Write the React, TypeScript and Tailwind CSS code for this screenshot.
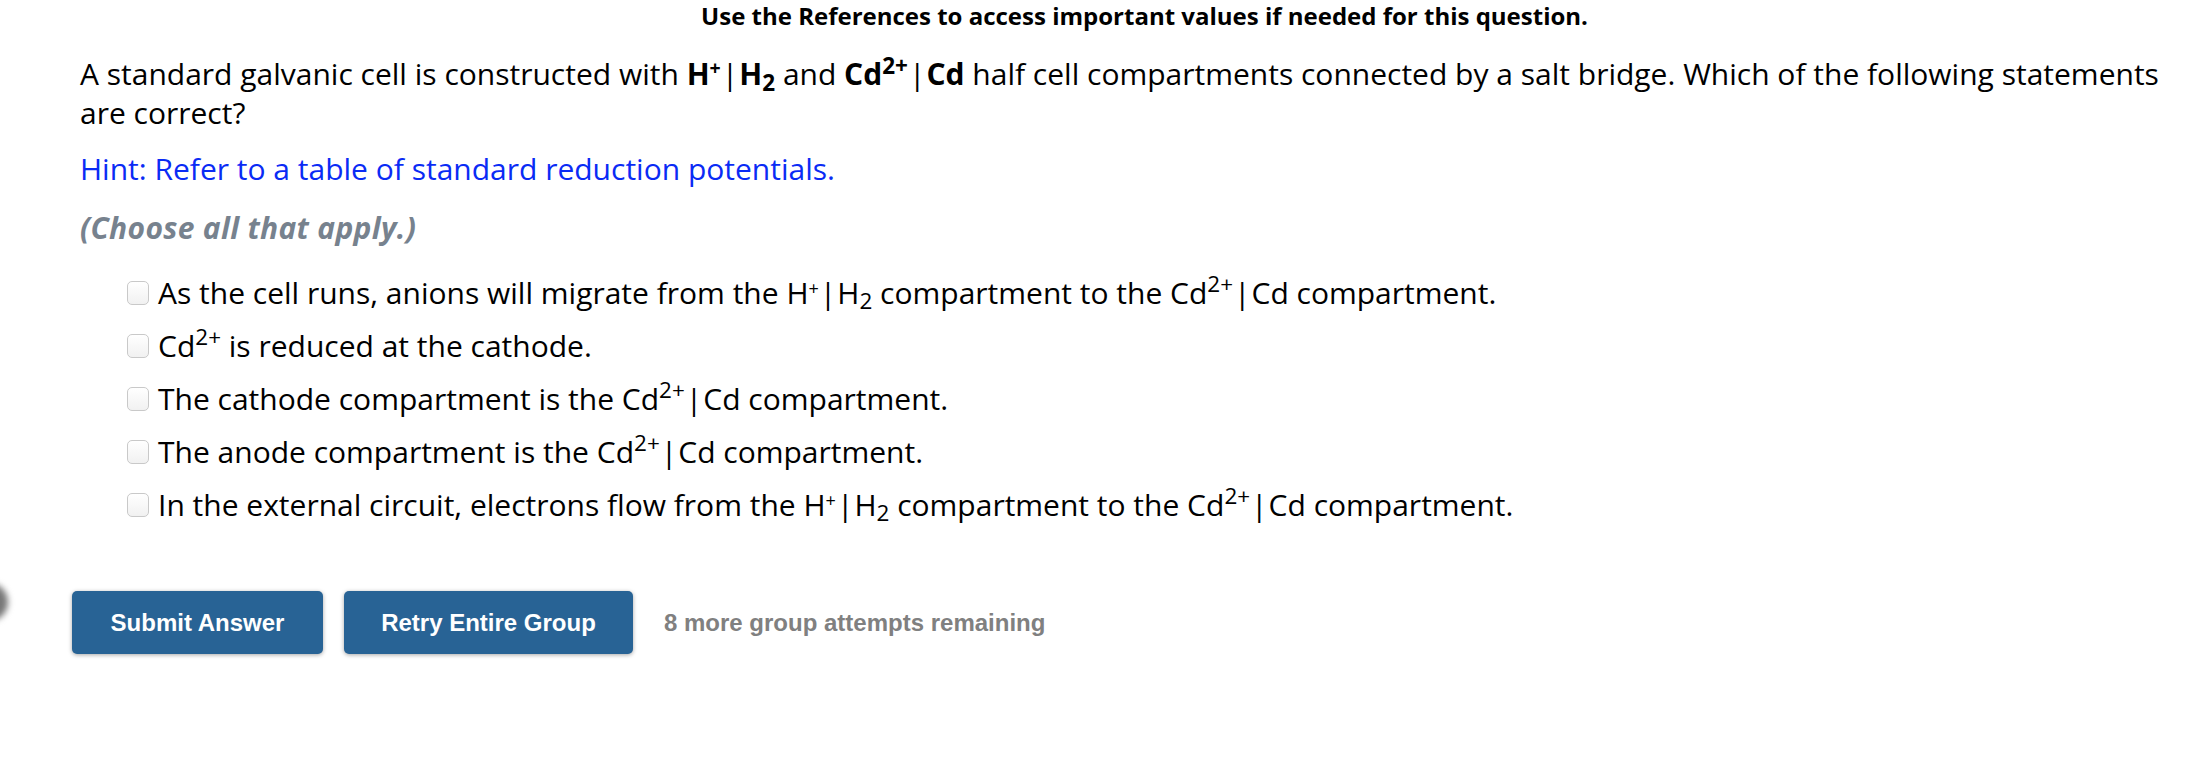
import React from "react";

const Box = () => (
  <span className="inline-block w-[22px] h-[24px] rounded-[5px] border border-[#c9c9c9] bg-gradient-to-b from-white to-[#f1f1f1] shrink-0" />
);

const Pipe = () => <span className="font-normal mx-[1px]">|</span>;

const Sup = ({ children, s = "text-[0.75em]" }: { children: React.ReactNode; s?: string }) => (
  <sup className={`${s} leading-[0]`}>{children}</sup>
);
const Sub = ({ children }: { children: React.ReactNode }) => (
  <sub className="text-[0.75em] leading-[0]">{children}</sub>
);

const HH2 = () => (
  <>
    H<Sup s="text-[0.6em]">+</Sup>
    <Pipe />H<Sub>2</Sub>
  </>
);
const CdCd = () => (
  <>
    Cd<Sup>2+</Sup>
    <Pipe />Cd
  </>
);

const options: React.ReactNode[] = [
  <>As the cell runs, anions will migrate from the <HH2 /> compartment to the <CdCd /> compartment.</>,
  <>Cd<Sup>2+</Sup> is reduced at the cathode.</>,
  <>The cathode compartment is the <CdCd /> compartment.</>,
  <>The anode compartment is the <CdCd /> compartment.</>,
  <>In the external circuit, electrons flow from the <HH2 /> compartment to the <CdCd /> compartment.</>,
];

export default function App() {
  return (
    <div className="relative w-[2201px] h-[770px] bg-white overflow-hidden text-black" style={{ fontFamily: '"Open Sans", sans-serif' }}>
      <div className="pl-[88px] pt-[2px] text-center text-[24px] leading-[28px] font-bold">
        Use the References to access important values if needed for this question.
      </div>
      <div className="pl-[80px] pr-[30px] mt-[24px] text-[30px] leading-[39px]">
        A standard galvanic cell is constructed with{" "}
        <b>
          H<Sup s="text-[0.65em]">+</Sup>
          <Pipe />H<Sub>2</Sub>
        </b>{" "}
        and{" "}
        <b>
          Cd<Sup>2+</Sup>
          <Pipe />Cd
        </b>{" "}
        half cell compartments connected by a salt bridge. Which of the following statements are correct?
      </div>
      <div className="pl-[80px] mt-[17px] text-[30px] leading-[39px] text-[#0a2bf5]">
        Hint: Refer to a table of standard reduction potentials.
      </div>
      <div className="pl-[80px] mt-[20px] text-[30px] leading-[39px] font-bold italic text-[#77828e] tracking-[0.3px]">
        (Choose all that apply.)
      </div>
      <div className="pl-[127px] mt-[19px] flex flex-col">
        {options.map((o, i) => (
          <div key={i} className="flex items-center gap-[9px] h-[53px] text-[30px]">
            <Box />
            <span className="leading-[40px] whitespace-nowrap">{o}</span>
          </div>
        ))}
      </div>
      <div className="absolute left-[-34px] top-[583px] w-[42px] h-[38px] rounded-full bg-[#777] blur-[3px]" />
      <div className="pl-[72px] mt-[60px] flex items-center" style={{ fontFamily: '"Liberation Sans", Arial, sans-serif' }}>
        <button className="w-[251px] h-[63px] rounded-[5px] bg-[#286395] text-white font-bold text-[24px] shadow-[0_1px_4px_rgba(0,0,0,0.35)]">
          Submit Answer
        </button>
        <button className="ml-[21px] w-[289px] h-[63px] rounded-[5px] bg-[#286395] text-white font-bold text-[24px] shadow-[0_1px_4px_rgba(0,0,0,0.35)]">
          Retry Entire Group
        </button>
        <span className="ml-[31px] text-[24px] font-bold text-[#808080]">8 more group attempts remaining</span>
      </div>
    </div>
  );
}
